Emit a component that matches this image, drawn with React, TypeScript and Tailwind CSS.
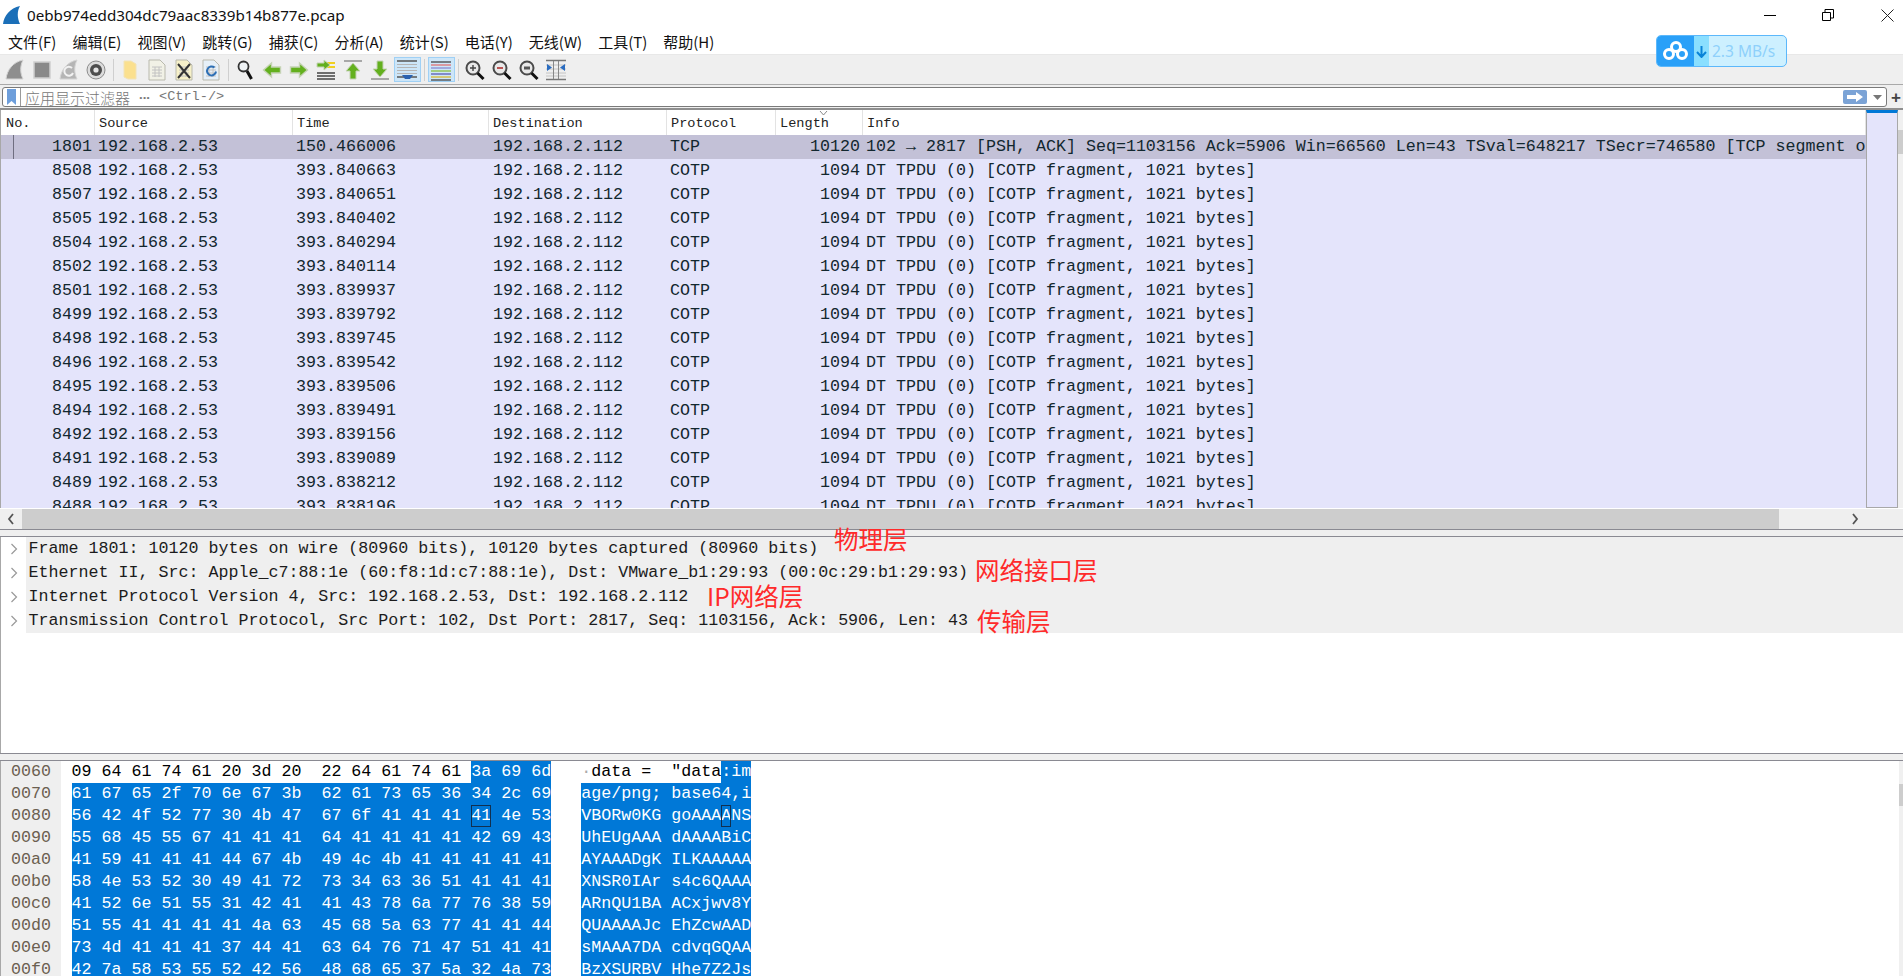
import type { ReactNode } from "react";

const MENU_ITEMS = ["文件(F)", "编辑(E)", "视图(V)", "跳转(G)", "捕获(C)", "分析(A)", "统计(S)", "电话(Y)", "无线(W)", "工具(T)", "帮助(H)"];

const COTP_ROWS = [
  ["8508", "393.840663"],
  ["8507", "393.840651"],
  ["8505", "393.840402"],
  ["8504", "393.840294"],
  ["8502", "393.840114"],
  ["8501", "393.839937"],
  ["8499", "393.839792"],
  ["8498", "393.839745"],
  ["8496", "393.839542"],
  ["8495", "393.839506"],
  ["8494", "393.839491"],
  ["8492", "393.839156"],
  ["8491", "393.839089"],
  ["8489", "393.838212"],
  ["8488", "393.838196"],
];

const DETAIL_ROWS = [
  "Frame 1801: 10120 bytes on wire (80960 bits), 10120 bytes captured (80960 bits)",
  "Ethernet II, Src: Apple_c7:88:1e (60:f8:1d:c7:88:1e), Dst: VMware_b1:29:93 (00:0c:29:b1:29:93)",
  "Internet Protocol Version 4, Src: 192.168.2.53, Dst: 192.168.2.112",
  "Transmission Control Protocol, Src Port: 102, Dst Port: 2817, Seq: 1103156, Ack: 5906, Len: 43",
];

const HEX_ROWS = [
  ["0070", "61 67 65 2f 70 6e 67 3b  62 61 73 65 36 34 2c 69", "age/png; base64,i"],
  ["0080", "56 42 4f 52 77 30 4b 47  67 6f 41 41 41 41 4e 53", "VBORw0KG goAAAANS"],
  ["0090", "55 68 45 55 67 41 41 41  64 41 41 41 41 42 69 43", "UhEUgAAA dAAAABiC"],
  ["00a0", "41 59 41 41 41 44 67 4b  49 4c 4b 41 41 41 41 41", "AYAAADgK ILKAAAAA"],
  ["00b0", "58 4e 53 52 30 49 41 72  73 34 63 36 51 41 41 41", "XNSR0IAr s4c6QAAA"],
  ["00c0", "41 52 6e 51 55 31 42 41  41 43 78 6a 77 76 38 59", "ARnQU1BA ACxjwv8Y"],
  ["00d0", "51 55 41 41 41 41 4a 63  45 68 5a 63 77 41 41 44", "QUAAAAJc EhZcwAAD"],
  ["00e0", "73 4d 41 41 41 37 44 41  63 64 76 71 47 51 41 41", "sMAAA7DA cdvqGQAA"],
  ["00f0", "42 7a 58 53 55 52 42 56  48 68 65 37 5a 32 4a 73", "BzXSURBV Hhe7Z2Js"],
];

const COLS = "grid grid-cols-[94px_198px_196px_178px_109px_87px_1fr]";
const COTP_INFO = "DT TPDU (0) [COTP fragment, 1021 bytes]";

const Fin = ({ fill }: { fill: string }) => (
  <svg width="20" height="21" viewBox="0 0 20 21">
    <path d="M1 20C2 11 8 3 18 1c-3 6-3 13 0 19Z" fill={fill} stroke="#d4d4d4" />
  </svg>
);

const Sheet = ({ tint = "#f1f1e6", children }: { tint?: string; children?: ReactNode }) => (
  <svg width="18" height="22" viewBox="0 0 18 22">
    <path d="M1 1h11l5 5v15H1Z" fill={tint} stroke="#b9b9ad" />
    <path d="M4 8h10M4 11h10M4 14h10M4 17h10M7 8v10M11 8v10" stroke="#c2c2c2" />
    {children}
  </svg>
);

const Arrow = ({ dir }: { dir: "left" | "right" }) => (
  <g transform={dir === "left" ? "rotate(180 10 10)" : undefined}>
    <path d="M1.500 7h9V3l8 7-8 7v-4h-9Z" fill="#63b01e" stroke="#c5d3b5" strokeWidth="1.400" />
  </g>
);

const Lens = ({ mark }: { mark?: "plus" | "minus" | "dot" }) => (
  <svg width="20" height="22" viewBox="0 0 20 22">
    <circle cx="8" cy="9" r="6.500" fill="#e9e9e9" stroke="#4a4a4a" strokeWidth="2" />
    <path d="m12.500 14 6 6" stroke="#111" strokeWidth="3" />
    {mark === "plus" && <path d="M5 9h6M8 6v6" stroke="#444" strokeWidth="1.400" />}
    {mark === "minus" && <path d="M5 9h6" stroke="#b03030" strokeWidth="1.600" />}
    {mark === "dot" && <path d="M5 9h6" stroke="#555" strokeWidth="3" />}
  </svg>
);

const ToolCell = ({ children, active }: { children: ReactNode; active?: boolean }) => (
  <div className={`flex h-[25px] w-[27px] shrink-0 items-center justify-center ${active ? "border border-[#9fd0f5] bg-[#cde6f8]" : ""}`}>{children}</div>
);

const ToolSep = () => (
  <div className="flex w-[7px] shrink-0 justify-center">
    <div className="h-[22px] w-px bg-[#cfcfcf]" />
  </div>
);

const Toolbar = () => (
  <div className="flex h-[30px] items-center border-b border-[#a9a9a9] bg-[#efefef] pl-[1.5px]">
    <ToolCell><Fin fill="#8e8e8e" /></ToolCell>
    <ToolCell>
      <svg width="18" height="18" viewBox="0 0 18 18"><rect x="1" y="1" width="16" height="16" fill="#8a8a8a" stroke="#cfcfcf" strokeWidth="1.500" /></svg>
    </ToolCell>
    <ToolCell>
      <svg width="20" height="21" viewBox="0 0 20 21">
        <path d="M1 20C2 11 8 3 18 1c-3 6-3 13 0 19Z" fill="#b5b5b5" stroke="#d4d4d4" />
        <path d="M13 9a4.500 4.500 0 1 0 1 5" fill="none" stroke="#f2f2f2" strokeWidth="2" />
      </svg>
    </ToolCell>
    <ToolCell>
      <svg width="20" height="20" viewBox="0 0 20 20">
        <circle cx="10" cy="10" r="9" fill="#dcdcdc" stroke="#8c8c8c" />
        <circle cx="10" cy="10" r="6" fill="#4d4d4d" />
        <circle cx="10" cy="10" r="2.600" fill="#e4e4e4" />
      </svg>
    </ToolCell>
    <ToolSep />
    <ToolCell>
      <svg width="14" height="20" viewBox="0 0 14 20"><path d="M1 1h7l5 3v15H5l-4-2Z" fill="#fbe08e" stroke="#f2e3b6" /></svg>
    </ToolCell>
    <ToolCell><Sheet /></ToolCell>
    <ToolCell>
      <Sheet tint="#f6f0c8"><path d="m3 5 12 14M15 5 3 19" stroke="#333" strokeWidth="2" /></Sheet>
    </ToolCell>
    <ToolCell>
      <Sheet tint="#e6f0f8"><path d="M12.500 8.500a4.500 4.500 0 1 0 1.500 4" fill="none" stroke="#2c6fb5" strokeWidth="2" /></Sheet>
    </ToolCell>
    <ToolSep />
    <ToolCell>
      <svg width="16" height="22" viewBox="0 0 16 22">
        <circle cx="6.500" cy="7.500" r="5" fill="#eef2f4" stroke="#333" strokeWidth="1.800" />
        <path d="m10 12 4.500 8" stroke="#111" strokeWidth="3" />
      </svg>
    </ToolCell>
    <ToolCell><svg width="20" height="20" viewBox="0 0 20 20"><Arrow dir="left" /></svg></ToolCell>
    <ToolCell><svg width="20" height="20" viewBox="0 0 20 20"><Arrow dir="right" /></svg></ToolCell>
    <ToolCell>
      <svg width="20" height="22" viewBox="0 0 20 22">
        <path d="M10 4h9M10 8h9" stroke="#f0d020" strokeWidth="2" />
        <path d="M1 14h18M1 17h18M1 20h18" stroke="#444" strokeWidth="1.600" />
        <path d="M1 4h7V1l6 5-6 5V8H1Z" fill="#63b01e" stroke="#c5d3b5" />
      </svg>
    </ToolCell>
    <ToolCell>
      <svg width="20" height="22" viewBox="0 0 20 22">
        <path d="M1 2h18" stroke="#a8a8a8" strokeWidth="2" />
        <path d="M10 4l7 8h-4v8H7v-8H3Z" fill="#63b01e" stroke="#c5d3b5" />
      </svg>
    </ToolCell>
    <ToolCell>
      <svg width="20" height="22" viewBox="0 0 20 22">
        <path d="M1 20h18" stroke="#a8a8a8" strokeWidth="2" />
        <path d="M10 18l7-8h-4V2H7v8H3Z" fill="#63b01e" stroke="#c5d3b5" />
      </svg>
    </ToolCell>
    <ToolCell active>
      <svg width="20" height="22" viewBox="0 0 20 22">
        <path d="M0 2h20" stroke="#555" strokeWidth="1.500" />
        <path d="M0 5.500h20M0 8.500h20M0 11.500h20M0 14.500h20" stroke="#b5b5b5" />
        <path d="M0 18h20" stroke="#555" strokeWidth="1.500" />
        <path d="M5 16h11l-3 4H8Z" fill="#2a62b0" />
      </svg>
    </ToolCell>
    <ToolSep />
    <ToolCell active>
      <svg width="20" height="22" viewBox="0 0 20 22">
        <path d="M0 3h20" stroke="#444" strokeWidth="1.300" />
        <path d="M0 6h20" stroke="#e07070" strokeWidth="1.300" />
        <path d="M0 9h20" stroke="#8a8ad0" strokeWidth="1.300" />
        <path d="M0 12h20" stroke="#8ac040" strokeWidth="1.300" />
        <path d="M0 15h20" stroke="#5a5ab0" strokeWidth="1.300" />
        <path d="M0 18h20" stroke="#d8b830" strokeWidth="1.300" />
        <path d="M0 21h20" stroke="#444" strokeWidth="1.300" />
      </svg>
    </ToolCell>
    <ToolSep />
    <ToolCell><Lens mark="plus" /></ToolCell>
    <ToolCell><Lens mark="minus" /></ToolCell>
    <ToolCell><Lens mark="dot" /></ToolCell>
    <ToolCell>
      <svg width="20" height="22" viewBox="0 0 20 22">
        <path d="M0 1.500h20M0 20.500h20" stroke="#777" strokeWidth="1.500" />
        <path d="M0 6h20M0 10h20M0 14h20M0 17h20" stroke="#c4c4c4" />
        <path d="M7.500 2v18M12.500 2v18" stroke="#888" />
        <path d="M1 5l5 3.500L1 12ZM19 5l-5 3.500 5 3.500Z" fill="#2a6cc0" />
      </svg>
    </ToolCell>
  </div>
);

const FilterBar = () => (
  <div className="flex h-[25px] items-center border-b-2 border-[#8f8f8f] bg-[#efefef] pt-px pl-0.5">
    <div className="flex h-[20px] w-[1885px] items-center rounded-[3px] border border-[#7a7a7a] bg-white">
      <svg className="ml-1 shrink-0" width="9" height="16" viewBox="0 0 9 16"><path d="M0 0h9v16L4.500 12 0 16Z" fill="#6d9edb" /></svg>
      <div className="ml-[4px] h-full w-px bg-[#9a9a9a]" />
      <div className="ml-1 flex flex-1 items-center gap-[9px] leading-none font-light text-[#777]">
        <span className="font-['Noto_Sans_CJK_SC',sans-serif] text-[15px]">应用显示过滤器</span>
        <span className="font-['Noto_Sans',sans-serif] text-[13px] font-bold">···</span>
        <span className="text-[13.600px]">&lt;Ctrl-/&gt;</span>
      </div>
      <div className="flex h-[14px] w-[24px] items-center justify-center rounded-[2px] bg-[#7ba3d6]">
        <svg width="16" height="10" viewBox="0 0 16 10"><path d="M0 3h9V0l7 5-7 5V7H0Z" fill="#fff" /></svg>
      </div>
      <svg className="mr-[4px] ml-[6px]" width="9" height="5" viewBox="0 0 9 5"><path d="M0 0h9L4.500 5Z" fill="#777" /></svg>
    </div>
    <span className="ml-[4px] font-['Liberation_Sans',sans-serif] text-[17px] leading-none font-bold text-[#444]">+</span>
  </div>
);

const HeaderCell = ({ children, pad = "pl-[4px]" }: { children: string; pad?: string }) => (
  <div className={`truncate border-r border-[#e3e3e3] leading-[27px] ${pad}`}>{children}</div>
);

const PacketRow = ({ no, time, dest, proto, len, info, selected }: { no: string; time: string; dest: string; proto: string; len: string; info: string; selected?: boolean }) => (
  <div className={`${COLS} h-6 shrink-0 leading-6 whitespace-pre ${selected ? "bg-[#c3c1d7]" : ""}`}>
    <div className="relative pr-[3px] text-right">
      {selected && <span className="absolute top-0 bottom-0 left-[12px] w-px bg-[#6f6e80]" />}
      {no}
    </div>
    <div className="pl-[3px]">192.168.2.53</div>
    <div className="pl-[3px]">{time}</div>
    <div className="pl-[4px]">{dest}</div>
    <div className="pl-[3px]">{proto}</div>
    <div className="pr-[3px] text-right">{len}</div>
    <div className="overflow-hidden pl-[3px]">{info}</div>
  </div>
);

const PacketList = () => (
  <div className="flex h-[398px] border-l border-[#a8a8a8]">
    <div className="flex w-[1865px] flex-col overflow-hidden">
      <div className={`${COLS} h-[25px] shrink-0 text-[13.600px] text-[#222]`}>
        <HeaderCell pad="pl-[5px]">No.</HeaderCell>
        <HeaderCell>Source</HeaderCell>
        <HeaderCell>Time</HeaderCell>
        <HeaderCell>Destination</HeaderCell>
        <HeaderCell>Protocol</HeaderCell>
        <div className="relative truncate border-r border-[#e3e3e3] pl-[4px] leading-[27px]">
          Length
          <svg className="absolute top-[1px] left-[43px]" width="9" height="5" viewBox="0 0 9 5"><path d="m1 0 3.500 4L8 0" fill="none" stroke="#888" /></svg>
        </div>
        <HeaderCell>Info</HeaderCell>
      </div>
      <div className="min-h-0 flex-1 overflow-hidden bg-[#e4e4fb] text-[16.670px] text-[#12272e]">
        <PacketRow selected no="1801" time="150.466006" dest="192.168.2.112" proto="TCP" len="10120" info="102 → 2817 [PSH, ACK] Seq=1103156 Ack=5906 Win=66560 Len=43 TSval=648217 TSecr=746580 [TCP segment of a reassembled PDU]" />
        {COTP_ROWS.map(([no, time]) => (
          <PacketRow key={no} no={no} time={time} dest="192.168.2.112" proto="COTP" len="1094" info={COTP_INFO} />
        ))}
      </div>
    </div>
    <div className="w-[32px] shrink-0 border-x border-b border-[#a8a8a8] border-t-[3px] border-t-[#0078d7] bg-[#e4e4fb]" />
    <div className="flex flex-1 flex-col bg-[#f0f0f0]">
      <div className="mt-5 h-6 bg-[#cdcdcd]" />
    </div>
  </div>
);

const HScrollbar = () => (
  <div className="mt-px flex h-5 items-center bg-[#efefef]">
    <div className="flex w-[22px] justify-center">
      <svg width="8" height="12" viewBox="0 0 8 12"><path d="M6 1 2 6l4 5" fill="none" stroke="#555" strokeWidth="1.800" /></svg>
    </div>
    <div className="h-full w-[1757px] bg-[#cdcdcd]" />
    <div className="flex-1 pl-[72px]">
      <svg width="8" height="12" viewBox="0 0 8 12"><path d="m2 1 4 5-4 5" fill="none" stroke="#555" strokeWidth="1.800" /></svg>
    </div>
  </div>
);

const Splitter = () => <div className="h-2 shrink-0 border-y border-[#8a8a92] bg-[#efefef]" />;

const Annotation = ({ className, children }: { className: string; children: string }) => (
  <span className={`absolute font-['Noto_Sans_CJK_SC',sans-serif] text-[24.500px] leading-none whitespace-nowrap text-[#ff2a2a] ${className}`}>{children}</span>
);

const PacketDetails = () => (
  <div className="relative h-[216px] shrink-0 border-l border-[#a8a8a8] text-[16.670px] text-[#1c1c1c]">
    {DETAIL_ROWS.map((row) => (
      <div key={row} className="flex h-6 leading-6 whitespace-pre">
        <div className="flex w-[24.500px] shrink-0 justify-center pl-0.5">
          <svg className="mt-[6px]" width="8" height="12" viewBox="0 0 8 12"><path d="m1.500 1 5 5-5 5" fill="none" stroke="#999" strokeWidth="1.200" /></svg>
        </div>
        <div className="flex-1 bg-[#efefef] pl-[3px]">{row}</div>
      </div>
    ))}
    <Annotation className="top-[-10px] left-[833px]">物理层</Annotation>
    <Annotation className="top-[21px] left-[974px]">网络接口层</Annotation>
    <Annotation className="top-[47px] left-[706px]">IP网络层</Annotation>
    <Annotation className="top-[72px] left-[976px]">传输层</Annotation>
  </div>
);

const HexRow = ({ offset, children }: { offset: string; children: ReactNode }) => (
  <div className="flex h-[22px] leading-[22px] whitespace-pre">
    <div className="w-[60px] shrink-0 bg-[#efefef] pl-[10px] text-[#6b6050]">{offset}</div>
    {children}
  </div>
);

const Selected = ({ children }: { children: ReactNode }) => (
  <span className="inline-block h-[22px] bg-[#0078d7] text-white">{children}</span>
);

const Cursor = ({ children }: { children: string }) => (
  <span className="inline-block h-[22px] leading-[22px] outline outline-offset-[-1px] outline-[#12304f]">{children}</span>
);

const HexDump = () => (
  <div className="flex min-h-0 flex-1 overflow-hidden border-l border-[#a8a8a8] text-[16.670px] text-black">
    <div className="min-w-0 flex-1">
      <HexRow offset="0060">
        <span className="ml-[10.500px]">{"09 64 61 74 61 20 3d 20  22 64 61 74 61 "}</span>
        <Selected>3a 69 6d</Selected>
        <span className="ml-[30px] text-[#aaa]">·</span>
        <span>{'data =  "data'}</span>
        <Selected>:im</Selected>
      </HexRow>
      {HEX_ROWS.map(([offset, hex, ascii], index) => (
        <HexRow key={offset} offset={offset}>
          <span className="w-[10.500px]" />
          {index === 1 ? (
            <Selected>
              {"56 42 4f 52 77 30 4b 47  67 6f 41 41 41 "}
              <Cursor>41</Cursor>
              {" 4e 53"}
            </Selected>
          ) : (
            <Selected>{hex}</Selected>
          )}
          <span className="w-[30px]" />
          {index === 1 ? (
            <Selected>
              VBORw0KG goAAA<Cursor>A</Cursor>NS
            </Selected>
          ) : (
            <Selected>{ascii}</Selected>
          )}
        </HexRow>
      ))}
    </div>
    <div className="flex w-1 shrink-0 flex-col bg-[#f0f0f0]">
      <div className="mt-[23px] h-[22px] bg-[#cdcdcd]" />
    </div>
  </div>
);

export default function App() {
  return (
    <div className="relative flex h-[976px] w-full flex-col overflow-hidden bg-white font-['Liberation_Mono','Noto_Sans_CJK_SC',monospace]">
      <div className="flex h-[30px] shrink-0 items-center pl-[2px]">
        <svg width="20" height="20" viewBox="0 0 20 20">
          <path d="M1 19C2 11 8 3 18 1c-3 5-3 12 0 18Z" fill="#1b6fb8" />
        </svg>
        <span className="ml-[5px] font-['Noto_Sans',sans-serif] text-[15.200px] text-[#111]">0ebb974edd304dc79aac8339b14b877e.pcap</span>
        <div className="ml-auto flex items-center">
          <div className="mr-[46px] h-px w-[12px] bg-black" />
          <svg className="mr-[47px]" width="12" height="12" viewBox="0 0 12 12"><path d="M.5 3.500h8v8h-8ZM3 3.500V.5h8.500V9H8.500" fill="none" stroke="#000" /></svg>
          <svg className="mr-[9px]" width="13" height="13" viewBox="0 0 13 13"><path d="m.5.5 12 12M12.500.5l-12 12" stroke="#222" /></svg>
        </div>
      </div>
      <div className="flex h-[25px] shrink-0 items-center border-b border-[#e8e8e8] font-['Noto_Sans_CJK_SC',sans-serif] text-[15px] text-[#111]">
        {MENU_ITEMS.map((item) => (
          <span key={item} className="px-2 whitespace-nowrap">
            {item}
          </span>
        ))}
      </div>
      <Toolbar />
      <FilterBar />
      <PacketList />
      <HScrollbar />
      <Splitter />
      <PacketDetails />
      <Splitter />
      <HexDump />

      <div className="absolute top-[35px] left-[1656px] flex h-[32px] w-[131px] overflow-hidden rounded-[5px] border border-[#5cb8fb] bg-[#cdf0ff]">
        <div className="flex w-[37px] items-center justify-center bg-[#2aa0f8]">
          <svg width="28" height="22" viewBox="0 0 28 22">
            <g fill="none" stroke="#fff" strokeWidth="3">
              <circle cx="14" cy="7" r="4.500" />
              <circle cx="7" cy="14" r="4.500" />
              <circle cx="20" cy="14" r="4.500" />
            </g>
          </svg>
        </div>
        <div className="flex w-[15px] items-center justify-center bg-[#8adfff]">
          <svg width="11" height="13" viewBox="0 0 11 13"><path d="M5.500 1v10M1 7l4.500 5L10 7" fill="none" stroke="#0a84d8" strokeWidth="2" /></svg>
        </div>
        <span className="ml-[3px] font-['Noto_Sans',sans-serif] text-[15.500px] leading-[30px] whitespace-nowrap text-[#8fd0fb]">2.3 MB/s</span>
      </div>
    </div>
  );
}
